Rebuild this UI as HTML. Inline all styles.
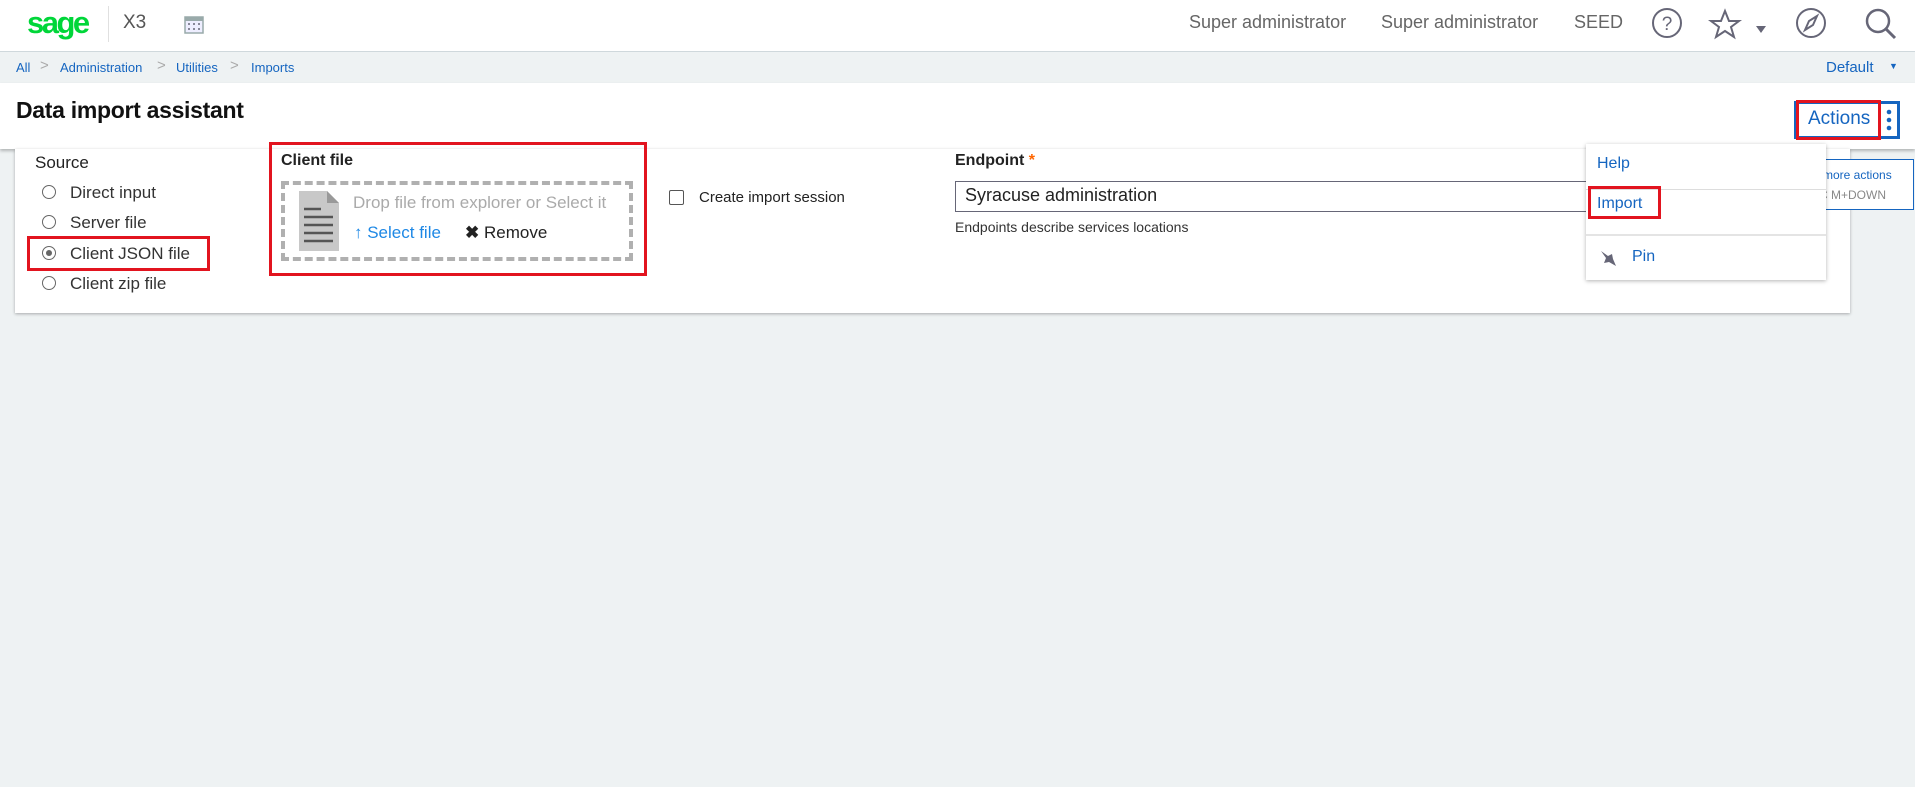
<!DOCTYPE html>
<html><head><meta charset="utf-8"><style>
*{box-sizing:border-box;margin:0;padding:0}
body{width:1915px;height:787px;background:#eef2f3;font-family:"Liberation Sans",Arial,sans-serif;position:relative;overflow:hidden;color:#222}
.a{position:absolute;white-space:nowrap}
.hdr{position:absolute;left:0;top:0;width:1915px;height:52px;background:#fff;border-bottom:1px solid #cfd8dc}
.crumb{position:absolute;left:0;top:52px;width:1915px;height:31px;background:#eef2f3;font-size:13px;color:#1565c0}
.title{position:absolute;left:0;top:83px;width:1915px;height:66px;background:#fff;box-shadow:0 2px 3px rgba(0,0,0,.25)}
.card{position:absolute;left:15px;top:149px;width:1835px;height:164px;background:#fff;box-shadow:0 1px 3px rgba(0,0,0,.3)}
.red{position:absolute;border:3px solid #e2141f}
.radio{position:absolute;width:14px;height:14px;border:1.5px solid #666;border-radius:50%;background:#fff}
.lbl{font-size:17px;color:#333}
.blue{color:#1565c0}
.sep{position:absolute;top:5px;color:#aaa;font-size:15px}
</style></head><body>
<div class="hdr"></div>
<div class="a" style="left:27px;top:5px;font-size:31px;font-weight:bold;color:#00d639;letter-spacing:-2.5px">sage</div>
<div style="position:absolute;left:108px;top:6px;width:1px;height:36px;background:#e0e0e0"></div>
<div class="a" style="left:123px;top:12px;font-size:19px;color:#555">X3</div>
<svg class="a" style="left:183px;top:13px" width="22" height="22" viewBox="0 0 22 22"><rect x="2" y="4" width="18" height="16" fill="#eef" stroke="#9aa" stroke-width="1.5"/><rect x="2" y="4" width="18" height="4" fill="#9aa"/><g fill="#889"><rect x="5" y="10" width="2" height="2"/><rect x="10" y="10" width="2" height="2"/><rect x="15" y="10" width="2" height="2"/><rect x="5" y="15" width="2" height="2"/><rect x="10" y="15" width="2" height="2"/><rect x="15" y="15" width="2" height="2"/></g></svg>
<div class="a" style="left:1189px;top:12px;font-size:18px;color:#666">Super administrator</div>
<div class="a" style="left:1381px;top:12px;font-size:18px;color:#666">Super administrator</div>
<div class="a" style="left:1574px;top:12px;font-size:18px;color:#666">SEED</div>
<svg class="a" style="left:1650px;top:6px" width="34" height="34"><circle cx="17" cy="17" r="14" fill="none" stroke="#667" stroke-width="2"/><text x="17" y="24" text-anchor="middle" font-size="19" fill="#667" font-family="Liberation Sans">?</text></svg>
<svg class="a" style="left:1708px;top:8px" width="34" height="32"><polygon points="17,3 21,13 31,13 23,19 26,29 17,23 8,29 11,19 3,13 13,13" fill="none" stroke="#667" stroke-width="2"/></svg>
<svg class="a" style="left:1755px;top:25px" width="12" height="10"><polygon points="1,1 11,1 6,8" fill="#667"/></svg>
<svg class="a" style="left:1794px;top:6px" width="34" height="34"><circle cx="17" cy="17" r="14" fill="none" stroke="#667" stroke-width="2"/><polygon points="23,10 19,19 11,24 15,15" fill="none" stroke="#667" stroke-width="2"/></svg>
<svg class="a" style="left:1862px;top:5px" width="38" height="38"><circle cx="16" cy="16" r="11" fill="none" stroke="#667" stroke-width="2.5"/><line x1="24" y1="24" x2="33" y2="33" stroke="#667" stroke-width="3"/></svg>
<div class="crumb">
<span class="a" style="left:16px;top:8px">All</span><span class="sep" style="left:40px">&gt;</span>
<span class="a" style="left:60px;top:8px">Administration</span><span class="sep" style="left:157px">&gt;</span>
<span class="a" style="left:176px;top:8px">Utilities</span><span class="sep" style="left:230px">&gt;</span>
<span class="a" style="left:251px;top:8px">Imports</span>
<span class="a" style="left:1826px;top:7px;font-size:15px">Default</span><span class="a" style="left:1889px;top:9px;font-size:9px">&#9660;</span>
</div>
<div class="title"><div class="a" style="left:16px;top:14px;font-size:23px;font-weight:bold;color:#111;letter-spacing:-0.3px">Data import assistant</div>
<div class="a" style="left:1794px;top:18px;width:106px;height:38px;border:3px solid #1565c0"></div>
<div class="red" style="left:1796px;top:17px;width:85px;height:40px"></div>
<div class="a blue" style="left:1808px;top:25px;font-size:19px">Actions</div>
<svg class="a" style="left:1886px;top:25px" width="6" height="24"><circle cx="3" cy="4" r="2.3" fill="#1565c0"/><circle cx="3" cy="12" r="2.3" fill="#1565c0"/><circle cx="3" cy="20" r="2.3" fill="#1565c0"/></svg>
</div>
<div class="card">
<div class="a" style="left:20px;top:4px;font-size:17px;color:#222">Source</div>
<div class="radio" style="left:27px;top:36px"></div><div class="a lbl" style="left:55px;top:34px">Direct input</div>
<div class="radio" style="left:27px;top:66px"></div><div class="a lbl" style="left:55px;top:64px">Server file</div>
<div class="radio" style="left:27px;top:97px"></div><div class="a" style="left:31px;top:101px;width:6px;height:6px;border-radius:50%;background:#666"></div><div class="a lbl" style="left:55px;top:95px">Client JSON file</div>
<div class="radio" style="left:27px;top:127px"></div><div class="a lbl" style="left:55px;top:125px">Client zip file</div>
<div class="red" style="left:12px;top:87px;width:183px;height:35px"></div>
<div class="a" style="left:266px;top:3px;font-size:16px;font-weight:bold;color:#222">Client file</div>
<div class="a" style="left:266px;top:32px;width:352px;height:80px;border:4px dashed #b0b0b0"></div>
<svg class="a" style="left:282px;top:40px" width="44" height="64"><path d="M2 2H30L42 14V62H2Z" fill="#c8c8c8"/><path d="M30 2V14H42" fill="#999"/><g stroke="#555" stroke-width="2.5"><line x1="7" y1="20" x2="24" y2="20"/><line x1="7" y1="28" x2="36" y2="28"/><line x1="7" y1="36" x2="36" y2="36"/><line x1="7" y1="44" x2="36" y2="44"/><line x1="7" y1="52" x2="36" y2="52"/></g></svg>
<div class="a" style="left:338px;top:44px;font-size:17px;color:#aaa">Drop file from explorer or Select it</div>
<div class="a blue" style="left:339px;top:74px;font-size:17px;color:#1e88e5">&#x2191; Select file</div>
<div class="a" style="left:450px;top:74px;font-size:17px;color:#222"><b>&#x2716;</b> Remove</div>
<div class="red" style="left:254px;top:-7px;width:378px;height:134px"></div>
<div class="a" style="left:654px;top:41px;width:15px;height:15px;border:1.5px solid #555;border-radius:2px"></div>
<div class="a" style="left:684px;top:40px;font-size:15px;color:#222">Create import session</div>
<div class="a" style="left:940px;top:3px;font-size:16px;font-weight:bold;color:#222">Endpoint <span style="color:#f60">*</span></div>
<div class="a" style="left:940px;top:32px;width:633px;height:31px;border:1px solid #667"></div>
<div class="a" style="left:950px;top:36px;font-size:18px;color:#222">Syracuse administration</div>
<div class="a" style="left:940px;top:70px;font-size:14px;color:#333">Endpoints describe services locations</div>
</div>
<div class="a" style="left:1808px;top:159px;width:106px;height:51px;background:#fff;border:1px solid #1565c0;font-size:12px"><div class="a blue" style="left:2px;top:8px">w more actions</div><div class="a" style="left:2px;top:28px;color:#888">SC M+DOWN</div></div>
<div class="a" style="left:1586px;top:144px;width:240px;height:136px;background:#fff;box-shadow:0 1px 4px rgba(0,0,0,.3)">
<div class="a blue" style="left:11px;top:11px;font-size:16px">Help</div>
<div class="a" style="left:0;top:45px;width:240px;height:1px;background:#ddd"></div>
<div class="a blue" style="left:11px;top:51px;font-size:16px">Import</div>
<div class="red" style="left:2px;top:42px;width:73px;height:33px"></div>
<div class="a" style="left:0;top:90px;width:240px;height:2px;background:#e4e4e4"></div>
<svg class="a" style="left:12px;top:104px" width="20" height="20"><path d="M3 3L10 8L14 6L15 11L18 18L11 14L6 15L8 10Z" fill="#667"/></svg>
<div class="a blue" style="left:46px;top:104px;font-size:16px">Pin</div>
</div>
</body></html>
